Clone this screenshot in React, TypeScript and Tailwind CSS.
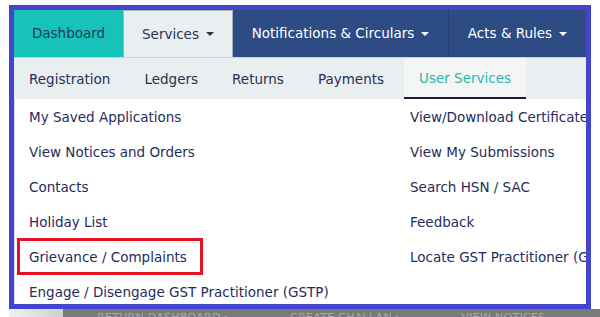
import React from 'react';

const leftItems = [
  'My Saved Applications',
  'View Notices and Orders',
  'Contacts',
  'Holiday List',
  'Grievance / Complaints',
  'Engage / Disengage GST Practitioner (GSTP)',
];

const rightItems = [
  'View/Download Certificates',
  'View My Submissions',
  'Search HSN / SAC',
  'Feedback',
  'Locate GST Practitioner (GSTP)',
  '',
];

function Caret({ className }: { className?: string }) {
  return (
    <svg width="8" height="4" viewBox="0 0 8 4" className={className}>
      <path d="M0 0h8L4 4z" fill="currentColor" />
    </svg>
  );
}

export default function App() {
  return (
    <div className="w-[600px] h-[317px] bg-white overflow-hidden font-['DejaVu_Sans',sans-serif] text-[13.5px]">
      <div className="ml-[9px] mt-[5px] w-[582px] h-[304px] border-[5px] border-[#4545cc] bg-white flex flex-col overflow-hidden">
        {/* top nav */}
        <div className="flex h-[47px] shrink-0 bg-[#2c4c83] text-white">
          <div className="w-[109px] flex items-center justify-center bg-[#17c3b9] text-[#1d3a5e]">Dashboard</div>
          <div className="w-[110px] flex items-center justify-center gap-[7px] bg-[#e9eef1] border border-[#a9b2ba] border-b-0 text-[#2a3552]">
            Services <Caret />
          </div>
          <div className="w-[215px] flex items-center justify-center gap-[7px]">
            Notifications &amp; Circulars <Caret />
          </div>
          <div className="flex-1 flex items-center justify-center gap-[7px] border-l border-[#243f6d]">
            Acts &amp; Rules <Caret />
          </div>
        </div>

        {/* sub nav */}
        <div className="flex h-[42px] shrink-0 bg-[#e9eef1] text-[#2a2f4f] border-t border-[#c9d0d6]">
          <div className="pl-[15px] pr-[17px] pt-[2px] flex items-center">Registration</div>
          <div className="px-[17px] pt-[2px] flex items-center">Ledgers</div>
          <div className="px-[17px] pt-[2px] flex items-center">Returns</div>
          <div className="pl-[17px] pr-[20px] pt-[2px] flex items-center">Payments</div>
          <div className="px-[15px] pt-[2px] flex items-center bg-[#f4f5f5] text-[#2bb5ad] border-b-2 border-[#141a4a]">User Services</div>
        </div>

        {/* menu items */}
        <div className="flex-1 grid grid-cols-[381px_1fr] border-l border-[#d7d7d7] text-[#1f2d5a]">
          {leftItems.map((item, i) => (
            <React.Fragment key={item}>
              <div className="h-[35px] flex items-center pl-[14px] pt-[2px] whitespace-nowrap relative">
                {i === 4 && (
                  <span className="absolute left-[2px] top-[-1px] w-[186px] h-[37px] border-[3px] border-[#e4131f]" />
                )}
                {item}
              </div>
              <div className="h-[35px] flex items-center pl-[14px] pt-[2px] whitespace-nowrap">{rightItems[i]}</div>
            </React.Fragment>
          ))}
        </div>
      </div>

      {/* page behind the dialog */}
      <div className="flex h-[8px]">
        <div className="w-[54px] ml-[9px] bg-gradient-to-r from-[#f2f2f2] to-[#cfcfcf]" />
        <div className="flex-1 bg-[#7a7a7a] text-[#a9a9a9] text-[11px] leading-[11px] overflow-hidden flex gap-[60px] pl-[34px] pt-[3px] tracking-wide">
          <span>RETURN DASHBOARD ▸</span>
          <span>CREATE CHALLAN ▸</span>
          <span>VIEW NOTICES</span>
        </div>
      </div>
    </div>
  );
}
